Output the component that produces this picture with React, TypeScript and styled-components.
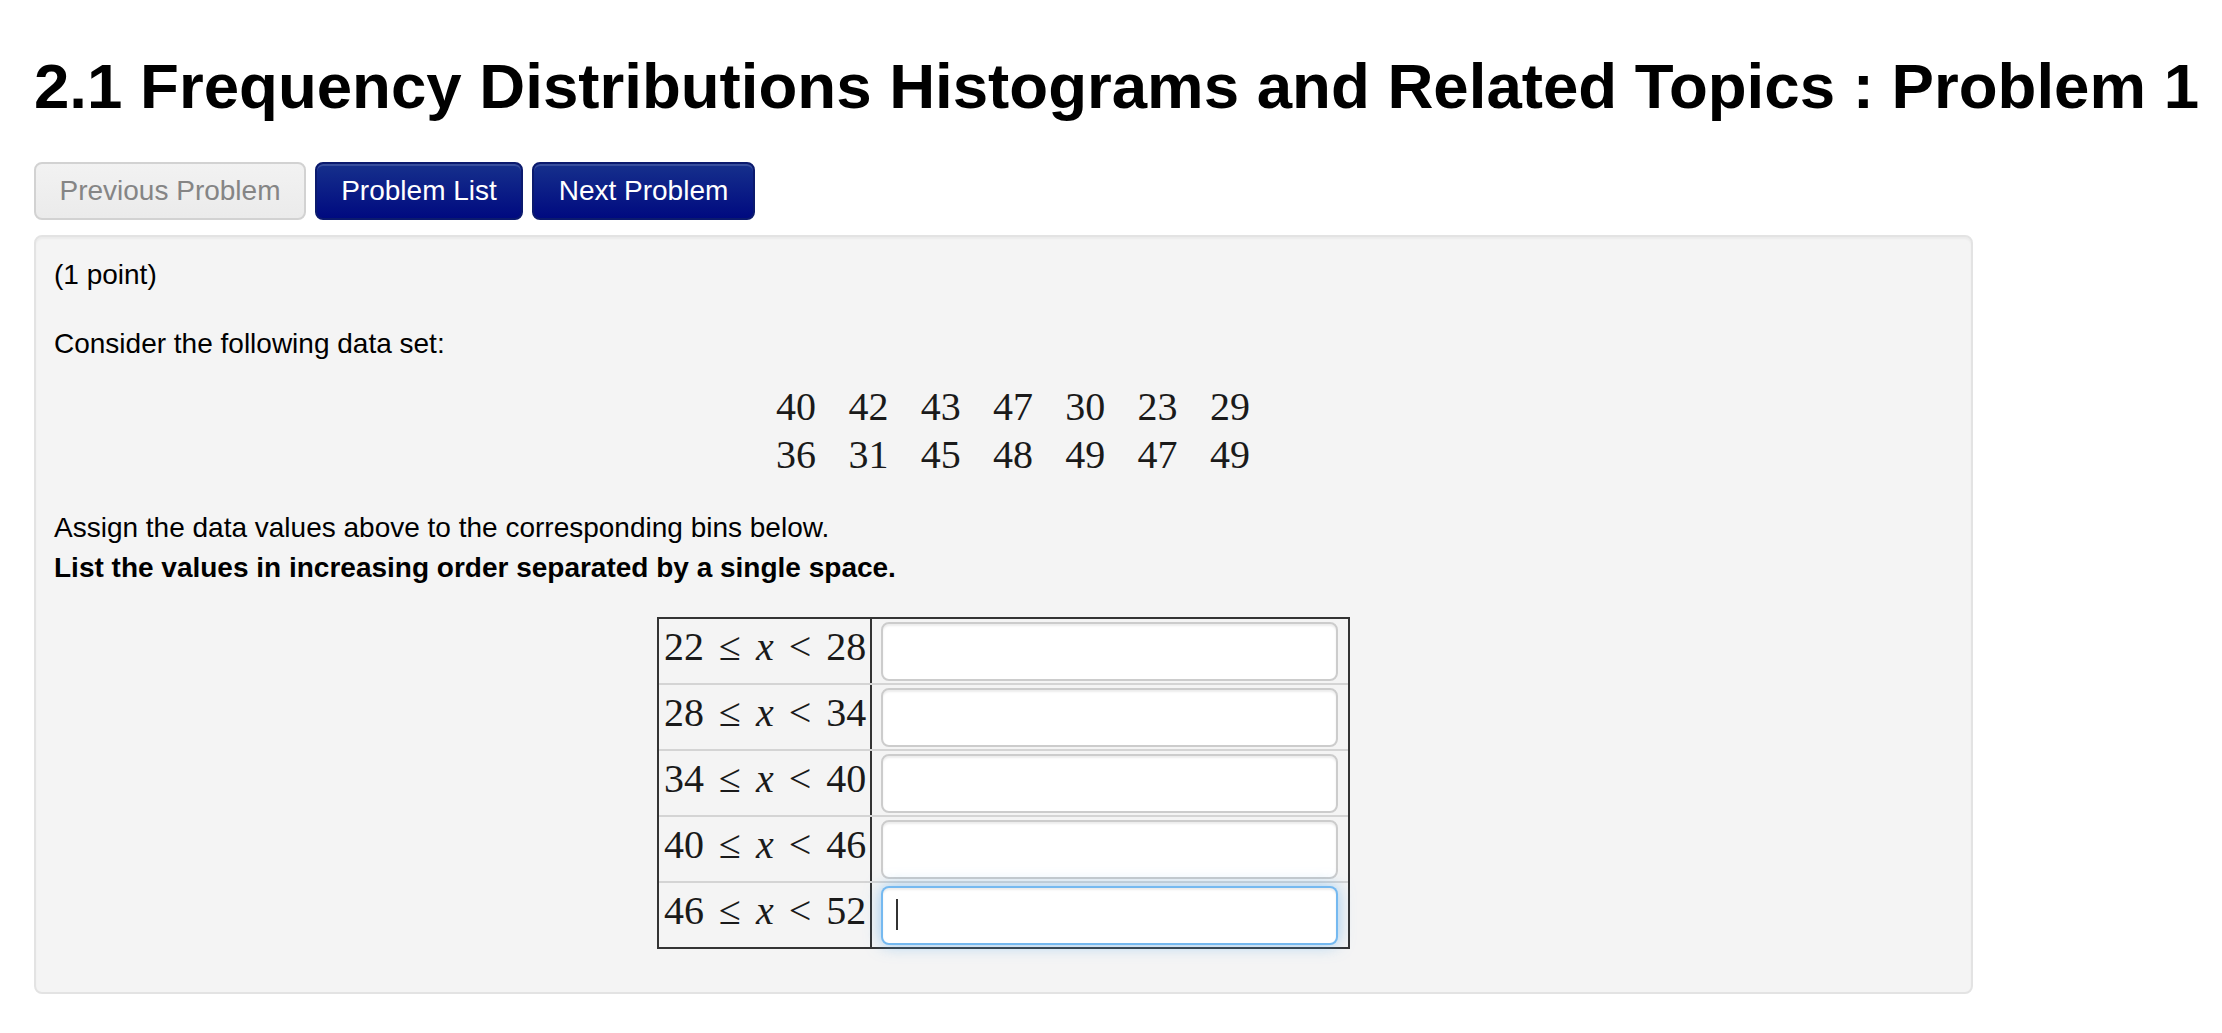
import React from "react"
import styled, { createGlobalStyle } from "styled-components"

const GlobalStyle = createGlobalStyle`
  html, body {
    margin: 0;
    padding: 0;
    background: #ffffff;
  }
  body {
    font-family: "Liberation Sans", Arial, Helvetica, sans-serif;
    color: #000;
  }
`

const data = [
  [40, 42, 43, 47, 30, 23, 29],
  [36, 31, 45, 48, 49, 47, 49],
]

const bins = [
  [22, 28],
  [28, 34],
  [34, 40],
  [40, 46],
  [46, 52],
]

const Page = styled.div`
  padding: 46px 0 40px 34px;
`

const Title = styled.h2`
  margin: 0;
  font-size: 63.6px;
  line-height: 80px;
  font-weight: 700;
  color: #000;
  white-space: nowrap;
`

const Nav = styled.div`
  display: flex;
  gap: 9px;
  margin-top: 36px;
`

const NavButton = styled.button<{ $disabled?: boolean; $width: number }>`
  box-sizing: border-box;
  width: ${({ $width }) => $width}px;
  height: 58px;
  padding: 0;
  font-family: "Liberation Sans", Arial, sans-serif;
  font-size: 28px;
  line-height: 40px;
  border-radius: 8px;
  border: 2px solid ${({ $disabled }) => ($disabled ? "#d2d2d2" : "#0b1a6e")};
  color: ${({ $disabled }) => ($disabled ? "#858585" : "#ffffff")};
  background: ${({ $disabled }) =>
    $disabled
      ? "linear-gradient(#f2f2f2, #ebebeb)"
      : "linear-gradient(#16308c, #000a80)"};
  box-shadow: ${({ $disabled }) =>
    $disabled ? "none" : "inset 0 2px 0 rgba(255,255,255,0.15)"};
  cursor: ${({ $disabled }) => ($disabled ? "default" : "pointer")};
`

const Panel = styled.div`
  box-sizing: border-box;
  width: 1939px;
  margin-top: 15px;
  padding: 18px 18px 43px 18px;
  background: #f4f4f4;
  border: 2px solid #e3e3e3;
  border-radius: 8px;
  box-shadow: inset 0 2px 2px rgba(0, 0, 0, 0.04);
`

const Para = styled.p<{ $top?: number; $bold?: boolean }>`
  margin: ${({ $top }) => $top ?? 0}px 0 0 0;
  font-size: 28px;
  line-height: 40px;
  font-weight: ${({ $bold }) => ($bold ? 700 : 400)};
`

const DataGrid = styled.div`
  display: grid;
  grid-template-columns: repeat(7, 40px);
  column-gap: 32.3px;
  justify-content: center;
  padding-left: 19px;
  margin: 19px 0 29px 0;
  font-family: "Liberation Serif", "Times New Roman", serif;
  font-size: 40px;
  line-height: 48px;
  color: #1a1a1a;
`

const DataCell = styled.span`
  text-align: center;
`

const BinTable = styled.div`
  box-sizing: border-box;
  width: 693px;
  margin: 29px auto 0 auto;
  border: 2px solid #333;
`

const BinRow = styled.div<{ $first?: boolean }>`
  display: flex;
  height: 64px;
  border-top: ${({ $first }) => ($first ? "none" : "2px solid #d4d4d4")};
`

const BinLabel = styled.div`
  box-sizing: border-box;
  width: 213px;
  padding: 0 0 0 5px;
  border-right: 2px solid #333;
  display: flex;
  align-items: flex-start;
  gap: 15px;
  font-family: "Liberation Serif", "Times New Roman", serif;
  font-size: 40px;
  line-height: 56px;
  color: #1a1a1a;
  white-space: nowrap;
`

const Var = styled.span`
  font-style: italic;
`

const InputCell = styled.div`
  position: relative;
  flex: 1;
  display: flex;
  align-items: center;
  padding: 0 10px 0 9px;
`

const AnswerInput = styled.input<{ $focused?: boolean }>`
  box-sizing: border-box;
  width: 100%;
  height: 59px;
  padding: 0 14px;
  font-family: "Liberation Sans", Arial, sans-serif;
  font-size: 28px;
  background: #fff;
  border-radius: 8px;
  outline: none;
  border: 2px solid ${({ $focused }) => ($focused ? "rgba(82,168,236,0.8)" : "#cccccc")};
  box-shadow: ${({ $focused }) =>
    $focused
      ? "inset 0 2px 2px rgba(0,0,0,0.075), 0 0 16px rgba(82,168,236,0.55)"
      : "inset 0 2px 2px rgba(0,0,0,0.075)"};
`

const Caret = styled.span`
  position: absolute;
  left: 24px;
  top: 16px;
  width: 2px;
  height: 31px;
  background: #333;
`

export default function App() {
  return (
    <>
      <GlobalStyle />
      <Page>
        <Title>2.1 Frequency Distributions Histograms and Related Topics : Problem 1</Title>
        <Nav>
          <NavButton $disabled $width={272}>Previous Problem</NavButton>
          <NavButton $width={208}>Problem List</NavButton>
          <NavButton $width={223}>Next Problem</NavButton>
        </Nav>
        <Panel>
          <Para>(1 point)</Para>
          <Para $top={29}>Consider the following data set:</Para>
          <DataGrid>
            {data.flat().map((v, i) => (
              <DataCell key={i}>{v}</DataCell>
            ))}
          </DataGrid>
          <Para>Assign the data values above to the corresponding bins below.</Para>
          <Para $bold>List the values in increasing order separated by a single space.</Para>
          <BinTable>
            {bins.map(([lo, hi], i) => (
              <BinRow key={i} $first={i === 0}>
                <BinLabel>
                  <span>{lo}</span>
                  <span>≤</span>
                  <Var>x</Var>
                  <span>&lt;</span>
                  <span>{hi}</span>
                </BinLabel>
                <InputCell>
                  <AnswerInput $focused={i === bins.length - 1} aria-label={`bin ${i + 1}`} />
                  {i === bins.length - 1 && <Caret />}
                </InputCell>
              </BinRow>
            ))}
          </BinTable>
        </Panel>
      </Page>
    </>
  )
}
